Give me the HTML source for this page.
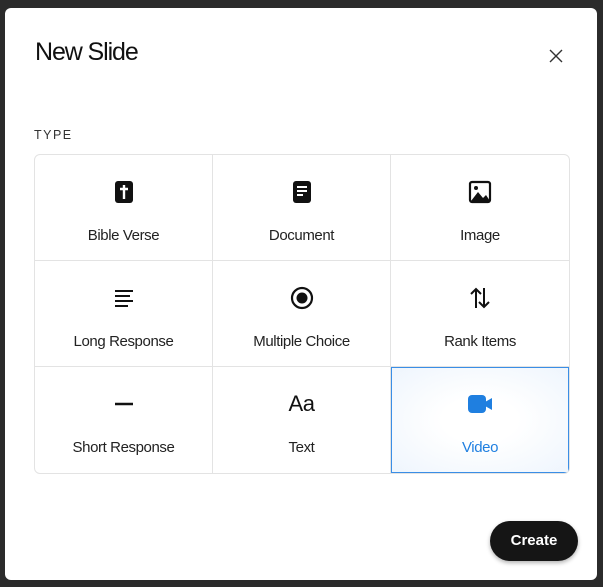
<!DOCTYPE html>
<html><head><style>
body{margin:0;width:603px;height:587px;background:#2b2b2b;font-family:"Liberation Sans",sans-serif;position:relative;overflow:hidden}
.card{position:absolute;left:5px;top:8px;width:592px;height:572px;background:#fff;border-radius:6px}
.title{position:absolute;font-size:25px;color:#111;letter-spacing:-1.1px}
.close{position:absolute;left:543px;top:43px}
.type{position:absolute;font-size:12.5px;letter-spacing:1.5px;color:#333}
.grid{position:absolute;width:534px;height:318px;border:1px solid #e3e3e3;border-radius:6px;display:grid;grid-template-columns:178px 178px 178px;grid-template-rows:106px 106px 106px;overflow:hidden}
.c{border-right:1px solid #e3e3e3;border-bottom:1px solid #e3e3e3;position:relative;font-size:15px;letter-spacing:-0.4px;color:#222;text-align:center}
.c:nth-child(3n){border-right:none}
.c:nth-child(n+7){border-bottom:none}
.ic{position:absolute;left:0;right:0;top:25px;height:24px;display:flex;justify-content:center}
.lb{position:absolute;left:0;right:0;top:72px}
.sel{background:radial-gradient(ellipse at center,#fff 30%,#eef5fd 100%);outline:1px solid #3a8ee6;outline-offset:-1px;color:#1f7fe0}
.btn{position:absolute;left:490px;top:521px;width:88px;height:40px;border-radius:20px;background:#151515;color:#fff;font-weight:bold;font-size:15px;line-height:40px;text-align:center;box-shadow:0 2px 4px rgba(0,0,0,.3)}
</style></head><body>
<div class="card"></div>
<div class="title" style="left:35px;top:38px">New Slide</div>
<svg class="close" width="26" height="26" viewBox="0 0 26 26"><path d="M7 7L19 19M19 7L7 19" stroke="#333" stroke-width="1.4"/></svg>
<div class="type" style="left:34px;top:128px">TYPE</div>
<div class="grid" style="left:34px;top:154px">
<div class="c"><div class="ic"><svg width="24" height="24" viewBox="0 0 24 24"><rect x="3" y="1" width="18" height="22" rx="3" fill="#111"/><path d="M12 5v14M8 9h8" stroke="#fff" stroke-width="2.4"/></svg></div><div class="lb">Bible Verse</div></div>
<div class="c"><div class="ic"><svg width="24" height="24" viewBox="0 0 24 24"><rect x="3" y="1" width="18" height="22" rx="3" fill="#111"/><path d="M7 7h10M7 11h10M7 15h6" stroke="#fff" stroke-width="2"/></svg></div><div class="lb">Document</div></div>
<div class="c"><div class="ic"><svg width="24" height="24" viewBox="0 0 24 24"><rect x="2" y="2" width="20" height="20" rx="2" fill="none" stroke="#111" stroke-width="2.2"/><circle cx="8" cy="8" r="2" fill="#111"/><path d="M3 21l7-9 5 6 3-3 4 6z" fill="#111"/></svg></div><div class="lb">Image</div></div>
<div class="c"><div class="ic"><svg width="24" height="24" viewBox="0 0 24 24"><path d="M3 5h18M3 10h15M3 15h18M3 20h13" stroke="#111" stroke-width="2"/></svg></div><div class="lb">Long Response</div></div>
<div class="c"><div class="ic"><svg width="24" height="24" viewBox="0 0 24 24"><circle cx="12" cy="12" r="10" fill="none" stroke="#111" stroke-width="2.2"/><circle cx="12" cy="12" r="5.5" fill="#111"/></svg></div><div class="lb">Multiple Choice</div></div>
<div class="c"><div class="ic"><svg width="24" height="24" viewBox="0 0 24 24"><path d="M8 22V3M3 8l5-5 5 5M16 2v19M11 16l5 5 5-5" fill="none" stroke="#111" stroke-width="2"/></svg></div><div class="lb">Rank Items</div></div>
<div class="c"><div class="ic"><svg width="24" height="24" viewBox="0 0 24 24"><path d="M3 12h18" stroke="#111" stroke-width="2.4"/></svg></div><div class="lb">Short Response</div></div>
<div class="c"><div class="ic" style="font-size:22px;top:25px;line-height:24px;color:#111">Aa</div><div class="lb">Text</div></div>
<div class="c sel"><div class="ic"><svg width="26" height="24" viewBox="0 0 26 24"><rect x="1" y="3" width="18" height="18" rx="4" fill="#1f7fe0"/><path d="M18 10l7-4v12l-7-4z" fill="#1f7fe0"/></svg></div><div class="lb">Video</div></div>
</div>
<div class="btn">Create</div>
</body></html>
